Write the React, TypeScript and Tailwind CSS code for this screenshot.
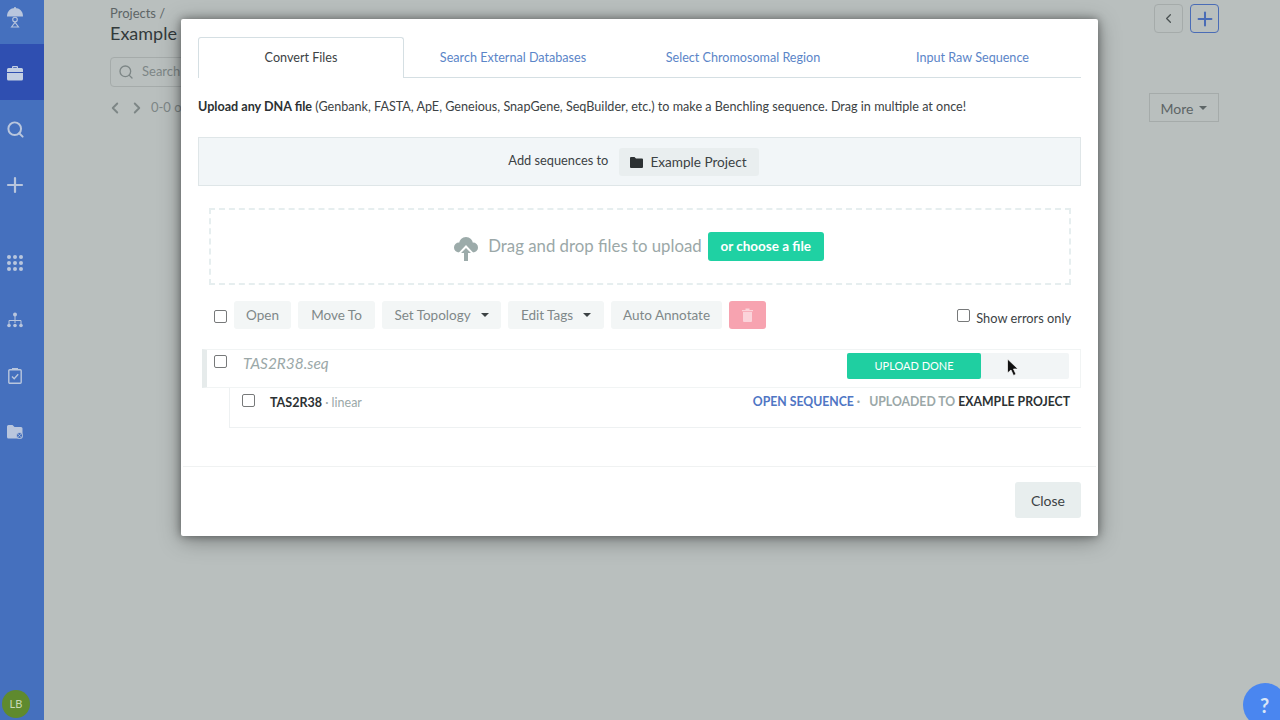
import { ChevronLeft, ChevronRight, Plus, Search } from "lucide-react";

const FONT = "font-['Lato','Liberation_Sans',sans-serif]";

function Logo() {
  return (
    <svg width="16" height="21" viewBox="0 0 16 21" className="text-[#b9c6dd]">
      <path d="M0 9.500 C0 4 3.500 1 8 1 C12.500 1 16 4 16 9.500 Z" fill="currentColor" />
      <rect x="7.200" y="0" width="1.600" height="2" fill="currentColor" />
      <circle cx="8" cy="12.500" r="2.300" fill="none" stroke="currentColor" strokeWidth="1.100" />
      <path d="M4.500 20 L8 15.500 L11.500 20 Z" fill="none" stroke="currentColor" strokeWidth="1.100" />
    </svg>
  );
}

function Briefcase() {
  return (
    <svg width="16" height="16" viewBox="0 0 16 16" fill="#c3cfe2">
      <path d="M5 3 V2 a1 1 0 0 1 1-1 h4 a1 1 0 0 1 1 1 v1 h-1.200 V2.200 H6.200 V3 Z" />
      <path d="M1.500 3 h13 A1.500 1.500 0 0 1 16 4.500 V7 H0 V4.500 A1.500 1.500 0 0 1 1.500 3 Z" />
      <path d="M0 8 H16 V14 A1.500 1.500 0 0 1 14.500 15.500 H1.500 A1.500 1.500 0 0 1 0 14 Z" />
    </svg>
  );
}

function Dots() {
  const pts = [2, 8, 14];
  return (
    <svg width="16" height="16" viewBox="0 0 16 16" fill="#b9c6dd">
      {pts.map((y) => pts.map((x) => <circle key={`${x}-${y}`} cx={x} cy={y} r="2" />))}
    </svg>
  );
}

function Tree() {
  return (
    <svg width="16" height="16" viewBox="0 0 16 16" fill="#b9c6dd" stroke="#b9c6dd">
      <circle cx="8" cy="2.500" r="2" stroke="none" />
      <path d="M8 4 V11 M2 12 V8.500 H14 V12" fill="none" strokeWidth="1" />
      <circle cx="2" cy="13.500" r="1.800" stroke="none" />
      <circle cx="8" cy="13.500" r="1.800" stroke="none" />
      <circle cx="14" cy="13.500" r="1.800" stroke="none" />
    </svg>
  );
}

function ClipCheck() {
  return (
    <svg width="14" height="16" viewBox="0 0 14 16" fill="none" stroke="#b9c6dd" strokeWidth="1.400">
      <rect x="0.800" y="1.800" width="12.400" height="13.400" rx="1" />
      <path d="M4 0.800 H10" strokeWidth="1.800" />
      <path d="M4 8.500 L6.200 10.700 L10.200 6.300" />
    </svg>
  );
}

function FolderX() {
  return (
    <svg width="16" height="14" viewBox="0 0 16 14">
      <path d="M0 1.500 A1.500 1.500 0 0 1 1.500 0 H5.500 L7.500 2 H14 A1.500 1.500 0 0 1 15.500 3.500 V12 A1.500 1.500 0 0 1 14 13.500 H1.500 A1.500 1.500 0 0 1 0 12 Z" fill="#b9c6dd" />
      <circle cx="12.500" cy="10.500" r="3" fill="#4570be" stroke="#b9c6dd" />
      <path d="M11.300 9.300 L13.700 11.700 M13.700 9.300 L11.300 11.700" stroke="#b9c6dd" strokeWidth="0.800" />
    </svg>
  );
}

function NavItem({ children, active, nudge }: { children: React.ReactNode; active?: boolean; nudge?: boolean }) {
  return (
    <div className={`flex h-14 items-center justify-start pl-[7px] ${nudge ? "pt-[2px]" : ""} ${active ? "bg-[#2f4fb1]" : ""}`}>
      <div className="flex w-4 items-center justify-center">{children}</div>
    </div>
  );
}

function Sidebar() {
  return (
    <aside className="flex h-full w-11 shrink-0 flex-col bg-[#4570be]">
      <div className="flex h-11 items-start pt-[7px] pl-[7px]">
        <Logo />
      </div>
      <NavItem active nudge>
        <Briefcase />
      </NavItem>
      <NavItem nudge>
        <Search size={19} strokeWidth={2.500} className="shrink-0 text-[#b9c6dd]" />
      </NavItem>
      <NavItem nudge>
        <Plus size={24} strokeWidth={2.200} className="shrink-0 text-[#b9c6dd]" />
      </NavItem>
      <div className="h-[23px]" />
      <NavItem>
        <Dots />
      </NavItem>
      <NavItem nudge>
        <Tree />
      </NavItem>
      <NavItem nudge>
        <ClipCheck />
      </NavItem>
      <NavItem nudge>
        <FolderX />
      </NavItem>
      <div className="mt-auto mb-[2px] ml-[2px] flex h-[28px] w-[28px] items-center justify-center rounded-full bg-[#5f8a2e] text-[11px] text-[#c9d8b4]">
        LB
      </div>
    </aside>
  );
}

function Background() {
  return (
    <main className="flex min-w-0 flex-1 flex-col pl-[66px] pr-[61px]">
      <div className="flex justify-between">
        <div className="pt-[5px]">
          <div className="text-[13px] leading-4 text-[#5d6566]">Projects /</div>
          <div className="text-[18px] leading-[24px] text-[#333a3b]">Example Project</div>
        </div>
        <div className="flex gap-[7px] pt-1">
          <div className="flex h-[29px] w-[29px] items-center justify-center rounded border border-[#a5abaa]">
            <ChevronLeft size={15} strokeWidth={2} className="text-[#4a5152]" />
          </div>
          <div className="flex h-[29px] w-[29px] items-center justify-center rounded border border-[#4a6cb6]">
            <Plus size={22} strokeWidth={2.200} className="text-[#4a6cb6]" />
          </div>
        </div>
      </div>
      <div className="mt-[12px] flex h-[30px] w-[300px] items-center gap-[8px] rounded-sm border border-[#a5abaa] pl-[7px] text-[13px] text-[#7d8686]">
        <Search size={16} />
        Search
      </div>
      <div className="flex items-start justify-between">
        <div className="mt-[11px] -ml-[4px] flex items-center gap-[4px] text-[13px] text-[#7d8686]">
          <ChevronLeft size={18} strokeWidth={2.500} />
          <ChevronRight size={18} strokeWidth={2.500} />
          <span className="ml-px">0-0 of 0</span>
        </div>
        <div className="mt-[6px] flex h-[29px] w-[70px] items-center justify-center gap-[6px] border border-[#a5abaa] pt-px text-[14px] text-[#5d6566]">
          More
          <span className="h-0 w-0 border-x-[4px] border-t-[4px] border-x-transparent border-t-[#5d6566]" />
        </div>
      </div>
    </main>
  );
}

function Tab({ label, width, active }: { label: string; width: string; active?: boolean }) {
  if (active) {
    return (
      <div className={`${width} -mb-px flex h-[41px] items-center justify-center rounded-t-[3px] border border-b-0 border-[#d5dfe3] bg-white text-[12.600px] text-[#3c4244]`}>
        {label}
      </div>
    );
  }
  return <div className={`${width} flex h-10 items-center justify-center pt-[2px] text-[12.600px] text-[#5b85c8]`}>{label}</div>;
}

function Tool({ label, caret, width }: { label: string; caret?: boolean; width: string }) {
  return (
    <div className={`${width} flex h-7 items-center justify-center gap-[10px] rounded-[3px] bg-[#f3f6f6] text-[13.500px] text-[#7f8889]`}>
      {label}
      {caret && <span className="h-0 w-0 border-x-[4px] border-t-[4px] border-x-transparent border-t-[#3c4244]" />}
    </div>
  );
}

function Check({ className = "" }: { className?: string }) {
  return (
    <input
      type="checkbox"
      readOnly
      className={`h-[13px] w-[13px] shrink-0 appearance-none rounded-[2px] border border-[#77797a] bg-white ${className}`}
    />
  );
}

function UploadCloud() {
  return (
    <svg width="24" height="24" viewBox="0 0 24 24" fill="#9cabaa" className="mt-[4px] mr-[4px]">
      <circle cx="5" cy="10.500" r="5" />
      <circle cx="12" cy="7" r="7" />
      <circle cx="19" cy="10.500" r="5" />
      <path d="M12 8 L20 16.500 H15.200 V24 H8.800 V16.500 H4 Z" fill="#fff" />
      <path d="M12 11 L17 16 H14 V24 H10 V16 H7 Z" />
    </svg>
  );
}

function Trash() {
  return (
    <svg width="11" height="14" viewBox="0 0 11 14" fill="#fbd3da">
      <path d="M0 2 H3.500 V0.500 H7.500 V2 H11 V3.200 H0 Z" />
      <path d="M1 4 H10 V13 A1 1 0 0 1 9 14 H2 A1 1 0 0 1 1 13 Z" />
    </svg>
  );
}

function Modal() {
  return (
    <div className="absolute top-[19px] left-[181px] flex h-[517px] w-[917px] flex-col rounded-[2px] bg-white px-[17px] pt-[18px] shadow-[0_0_8px_rgba(0,0,0,0.4),0_4px_22px_rgba(0,0,0,0.35)]">
      <div className="flex border-b border-[#d5dfe3]">
        <Tab label="Convert Files" width="w-[206px]" active />
        <Tab label="Search External Databases" width="w-[218px]" />
        <Tab label="Select Chromosomal Region" width="w-[242px]" />
        <Tab label="Input Raw Sequence" width="w-[217px]" />
      </div>
      <p className="mt-[19px] h-5 text-[12.600px] leading-5 text-[#3c4244]">
        <b className="font-bold text-[#2c3133]">Upload any DNA file</b> (Genbank, FASTA, ApE, Geneious, SnapGene, SeqBuilder, etc.) to make a Benchling sequence. Drag in multiple at once!
      </p>
      <div className="mt-[20px] flex h-[49px] items-center justify-center border border-[#dfe6e8] bg-[#f2f6f8] pr-[12px]">
        <span className="-mt-[2px] text-[12.800px] text-[#3c4244]">Add sequences to</span>
        <span className="ml-[11px] flex h-[28px] items-center gap-[7px] rounded-[3px] bg-[#e9eeef] pt-[2px] pr-[12px] pl-[11px] text-[13.600px] text-[#3c4244]">
          <svg width="13" height="11" viewBox="0 0 13 11" fill="#2c3133">
            <path d="M0 1 A1 1 0 0 1 1 0 H4.500 L6 1.500 H12 A1 1 0 0 1 13 2.500 V10 A1 1 0 0 1 12 11 H1 A1 1 0 0 1 0 10 Z" />
          </svg>
          Example Project
        </span>
      </div>
      <div className="mt-[22px] mr-[10px] ml-[11px] flex h-[77px] items-center justify-center gap-[6px] border-2 border-dashed border-[#e6eeef] pr-[2px]">
        <UploadCloud />
        <span className="-mt-[2px] text-[16.800px] text-[#9ba8a8]">Drag and drop files to upload</span>
        <span className="flex h-[29px] w-[116px] items-center justify-center rounded-[3px] bg-[#1fd1a3] text-[13.500px] font-bold text-white">
          or choose a file
        </span>
      </div>
      <div className="mt-4 flex items-center gap-[7px]">
        <Check className="mt-[2px] ml-4" />
        <Tool label="Open" width="w-[57px]" />
        <Tool label="Move To" width="w-[77px]" />
        <Tool label="Set Topology" caret width="w-[119px]" />
        <Tool label="Edit Tags" caret width="w-[96px]" />
        <Tool label="Auto Annotate" width="w-[111px]" />
        <div className="flex h-7 w-[37px] items-center justify-center rounded-[3px] bg-[#f7a3b0]">
          <Trash />
        </div>
        <label className="mt-[8px] mr-[10px] ml-auto flex items-start gap-[6px] self-start text-[12.800px] leading-[18px] text-[#3c4244]">
          <Check />
          Show errors only
        </label>
      </div>
      <div className="mt-[20px] ml-[4px] flex h-[39px] items-start border border-l-[5px] border-[#f1f4f4] border-l-[#e6ebeb] pl-[7px]">
        <Check className="mt-[5px]" />
        <span className="mt-[2px] ml-[16px] text-[15.400px] text-[#9ba8a8] italic">TAS2R38.seq</span>
        <div className="mt-[3px] mr-[11px] ml-auto flex h-[26px] w-[222px] rounded-[2px] bg-[#f2f5f6]">
          <div className="flex w-[134px] items-center justify-center rounded-[2px] bg-[#1fcfa1] text-[11px] text-white">UPLOAD DONE</div>
        </div>
      </div>
      <div className="ml-[31px] flex h-[40px] items-start border-b border-l border-[#eef1f2] pl-[12px]">
        <Check className="mt-[6px]" />
        <span className="mt-[6px] ml-[15px] text-[12.500px]">
          <b className="font-bold text-[#2c3133]">TAS2R38</b>
          <span className="text-[#9ba8a8]"> · linear</span>
        </span>
        <span className="mt-[5px] mr-[11px] ml-auto text-[12.250px] font-bold">
          <span className="text-[#4f76c4]">OPEN SEQUENCE</span>
          <span className="text-[#9ba8a8]"> ·&nbsp;&nbsp; UPLOADED TO </span>
          <span className="text-[#2c3133]">EXAMPLE PROJECT</span>
        </span>
      </div>
      <div className="-mx-[15px] mt-[38px] border-t border-[#f0f2f2]" />
      <div className="mt-[15px] flex justify-end">
        <div className="flex h-[36px] w-[66px] items-center justify-center rounded-[3px] bg-[#e8eeee] text-[14px] text-[#3c4244]">Close</div>
      </div>
    </div>
  );
}

export default function App() {
  return (
    <div className={`relative flex h-[720px] w-[1280px] overflow-hidden bg-[#b9bfbe] ${FONT}`}>
      <Sidebar />
      <Background />
      <Modal />
      {/* pointer from the recording */}
      <svg width="13" height="19" viewBox="0 0 13 19" className="absolute top-[358px] left-[1006px]">
        <path d="M1.500 1 V15 L5 12 L7.500 17.500 L10 16.300 L7.500 11 H12 Z" fill="#111" stroke="#fff" strokeWidth="0.700" />
      </svg>
      <div className="absolute top-[683px] left-[1243px] flex h-[44px] w-[44px] items-center justify-center rounded-full bg-[#4a86f0] pr-[1px] text-[20px] font-bold text-[#dbe6f7]">?</div>
    </div>
  );
}
